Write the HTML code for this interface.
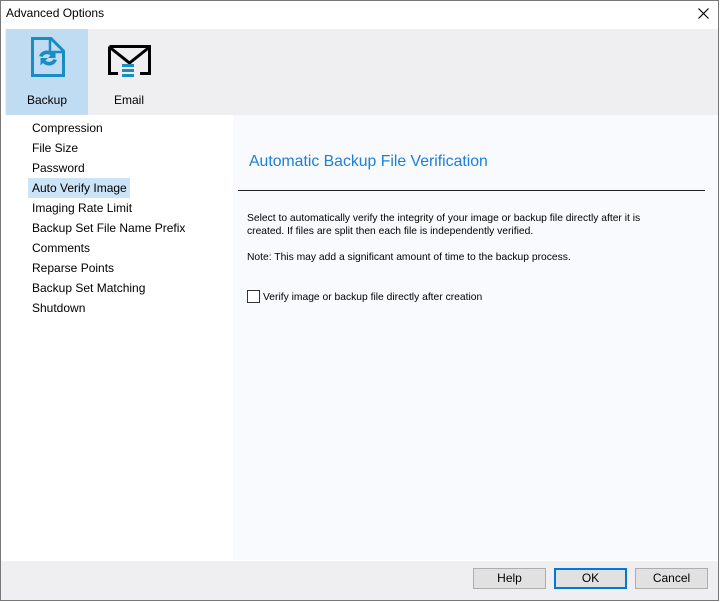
<!DOCTYPE html>
<html><head><style>
*{margin:0;padding:0;box-sizing:border-box}
body{width:720px;height:602px;overflow:hidden;background:#fff;font-family:"Liberation Sans",sans-serif;font-size:12px;color:#000;position:relative}
.win{position:absolute;left:0;top:0;width:719px;height:601px;border:1px solid #777;background:#fff}
.title{position:absolute;left:6px;top:6px;font-size:12px}
.tb{position:absolute;left:5px;top:29px;width:713px;height:86px;background:#efeff2}
.sel{position:absolute;left:6px;top:29px;width:82px;height:86px;background:#bfdcf2}
.lbl{position:absolute;font-size:12px}
.list{position:absolute;left:32px;top:121px}
.list div{height:20px;line-height:14px}
.hl{position:absolute;left:28px;top:178px;width:102px;height:20px;background:#cce4f7}
.panel{position:absolute;left:233px;top:115px;width:485px;height:445px;background:#f9fafd}
.h{position:absolute;left:249px;top:153px;font-size:15.8px;color:#1b7fd8}
.rule{position:absolute;left:238px;top:190px;width:467px;height:1px;background:#222}
.p{position:absolute;left:247px;font-size:10.3px;line-height:13px}
.cb{position:absolute;left:247px;top:290px;width:13px;height:13px;border:1px solid #333;background:#fff}
.bot{position:absolute;left:1px;top:561px;width:717px;height:39px;background:#efeff1}
.btn{position:absolute;top:568px;width:73px;height:21px;border:1px solid #adadad;background:#e1e1e1;text-align:center;line-height:19px;font-size:12px}
</style></head><body>
<div class="win"></div>
<div class="title">Advanced Options</div>
<svg style="position:absolute;left:698px;top:8px" width="11" height="11" viewBox="0 0 11 11"><path d="M0.5 0.5 L10.5 10.5 M10.5 0.5 L0.5 10.5" stroke="#000" stroke-width="1.2"/></svg>
<div class="tb"></div>
<div class="sel"></div>
<svg style="position:absolute;left:30px;top:36px" width="36" height="42" viewBox="0 0 36 42">
<path d="M2.5 2.5 H21 L33.5 15 V39.5 H2.5 Z" fill="none" stroke="#1a8cc4" stroke-width="3"/>
<path d="M20 2.5 V16 H33.5" fill="none" stroke="#1a8cc4" stroke-width="2.5"/>
<path d="M9 20 a8.5 8.5 0 0 1 14 -3 l2.5 -2.5 v7.5 h-7.5 l2.5 -2.5 a5 5 0 0 0 -8 1.5 z" fill="#1a8cc4"/>
<path d="M27 24 a8.5 8.5 0 0 1 -14 3 l-2.5 2.5 v-7.5 h7.5 l-2.5 2.5 a5 5 0 0 0 8 -1.5 z" fill="#1a8cc4"/>
</svg>
<svg style="position:absolute;left:108px;top:45px" width="43" height="32" viewBox="0 0 43 32">
<path d="M1.5 1.5 H41.5 V28.5 H32 M1.5 1.5 V28.5 H10" fill="none" stroke="#000" stroke-width="3"/>
<path d="M2 2.5 L21.5 18 L41 2.5" fill="none" stroke="#000" stroke-width="3"/>
<rect x="14" y="19" width="12" height="3" fill="#1a8cc4"/><rect x="14" y="24" width="12" height="3" fill="#1a8cc4"/><rect x="14" y="29" width="12" height="3" fill="#1a8cc4"/>
</svg>
<div class="lbl" style="left:27px;top:93px">Backup</div>
<div class="lbl" style="left:114px;top:93px">Email</div>
<div class="hl"></div>
<div class="list">
<div>Compression</div><div>File Size</div><div>Password</div><div>Auto Verify Image</div><div>Imaging Rate Limit</div><div>Backup Set File Name Prefix</div><div>Comments</div><div>Reparse Points</div><div>Backup Set Matching</div><div>Shutdown</div>
</div>
<div class="panel"></div>
<div class="h">Automatic Backup File Verification</div>
<div class="rule"></div>
<div class="p" style="top:212px">Select to automatically verify the integrity of your image or backup file directly after it is<br>created. If files are split then each file is independently verified.</div>
<div class="p" style="top:251px">Note: This may add a significant amount of time to the backup process.</div>
<div class="cb"></div>
<div class="p" style="left:263px;top:291px">Verify image or backup file directly after creation</div>
<div class="bot"></div>
<div class="btn" style="left:473px">Help</div>
<div class="btn" style="left:554px;border:2px solid #0078d7;line-height:17px">OK</div>
<div class="btn" style="left:635px">Cancel</div>
</body></html>
